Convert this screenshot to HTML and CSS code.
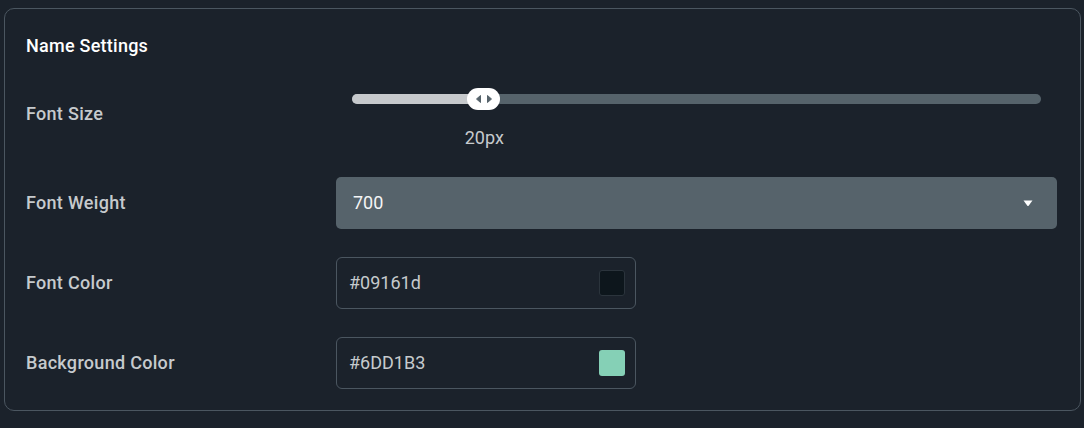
FILE: index.html
```html
<!DOCTYPE html>
<html lang="en">
<head>
<meta charset="utf-8">
<title>Name Settings</title>
<link rel="stylesheet" href="styles.css">
</head>
<body>
<div class="page">
  <section class="card">
    <h2 class="card-title">Name Settings</h2>
    <div class="rows">
      <label class="row-label">Font Size</label>
      <div class="slider">
        <div class="slider-track">
          <div class="slider-fill" style="width: 19.2%"></div>
          <div class="slider-thumb" style="left: 19.2%">
            <svg width="18" height="10" viewBox="0 0 18 10" aria-hidden="true">
              <path d="M5.5 1.5 L1.5 5 L5.5 8.5 Z" fill="#56636b" stroke="#56636b" stroke-width="1" stroke-linejoin="round"/>
              <path d="M12.5 1.5 L16.5 5 L12.5 8.5 Z" fill="#56636b" stroke="#56636b" stroke-width="1" stroke-linejoin="round"/>
            </svg>
          </div>
          <div class="slider-value" style="left: 19.2%">20px</div>
        </div>
      </div>

      <label class="row-label">Font Weight</label>
      <div class="select">
        <span class="select-value">700</span>
        <svg class="select-caret" width="10" height="7" viewBox="0 0 10 7" aria-hidden="true">
          <path d="M0.5 0.5 H9.5 L5.8 5.6 Q5 6.6 4.2 5.6 Z" fill="#ffffff"/>
        </svg>
      </div>

      <label class="row-label">Font Color</label>
      <div class="color-input">
        <span class="color-text">#09161d</span>
        <span class="swatch swatch-dark"></span>
      </div>

      <label class="row-label">Background Color</label>
      <div class="color-input">
        <span class="color-text">#6DD1B3</span>
        <span class="swatch swatch-mint"></span>
      </div>
    </div>
  </section>
</div>
</body>
</html>
```

FILE: styles.css
```css
* { box-sizing: border-box; }

html, body {
  margin: 0;
  background: #1b222b;
}

body {
  font-family: Roboto, "Noto Sans", "Liberation Sans", sans-serif;
  font-size: 18px;
  color: #c6cacd;
}

.page {
  padding: 8px 3px 0 4px;
}

.card {
  border: 1px solid #4b5660;
  border-radius: 10px;
  padding: 24px 23px 21px 21px;
}

.card-title {
  margin: 0 0 20px;
  font-size: 18px;
  line-height: 26px;
  font-weight: 500;
  letter-spacing: 0.25px;
  color: #ffffff;
}

.rows {
  display: grid;
  grid-template-columns: 310px 1fr;
  row-gap: 28px;
  align-items: center;
}

.row-label {
  font-size: 18px;
  line-height: 26px;
  font-weight: 500;
  letter-spacing: 0.3px;
  color: #c6cacd;
}

/* slider */
.slider {
  height: 70px;
  padding: 15px 16px 0;
}

.slider-track {
  position: relative;
  height: 10px;
  border-radius: 5px;
  background: #56636b;
}

.slider-fill {
  height: 100%;
  border-radius: 5px;
  background: #c6c9cc;
}

.slider-thumb {
  position: absolute;
  top: -6px;
  width: 33px;
  height: 22px;
  margin-left: -17px;
  border-radius: 11px;
  background: #ffffff;
  display: flex;
  align-items: center;
  justify-content: center;
}

.slider-thumb svg {
  display: block;
}

.slider-value {
  position: absolute;
  top: 31px;
  transform: translateX(-50%);
  line-height: 26px;
  color: #c6cacd;
}

/* select */
.select {
  height: 52px;
  border-radius: 5px;
  background: #56636b;
  padding: 0 24px 0 17px;
  display: flex;
  align-items: center;
  justify-content: space-between;
}

.select-value {
  color: #f4f5f6;
  line-height: 26px;
}

.select-caret {
  display: block;
}

/* colour inputs */
.color-input {
  width: 300px;
  height: 52px;
  border: 1px solid #4b5660;
  border-radius: 6px;
  padding: 0 10px 0 12px;
  display: flex;
  align-items: center;
  justify-content: space-between;
}

.color-text {
  color: #c6cacd;
  line-height: 26px;
}

.swatch {
  width: 26px;
  height: 26px;
  border-radius: 3px;
}

.swatch-dark {
  background: #0d161c;
  border: 1px solid #2b343c;
}

.swatch-mint {
  background: #85d0b6;
}
```
